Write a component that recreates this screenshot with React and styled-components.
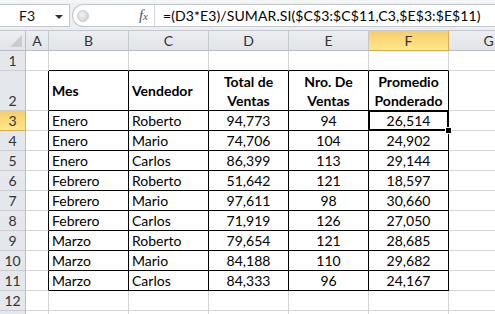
import React from "react";
import styled, { createGlobalStyle } from "styled-components";

const GlobalStyle = createGlobalStyle`
  html, body {
    margin: 0;
    padding: 0;
    background: #ffffff;
  }
`;

const COLS = ["A", "B", "C", "D", "E", "F", "G"];

const rows = [
  ["Enero", "Roberto", "94,773", "94", "26,514"],
  ["Enero", "Mario", "74,706", "104", "24,902"],
  ["Enero", "Carlos", "86,399", "113", "29,144"],
  ["Febrero", "Roberto", "51,642", "121", "18,597"],
  ["Febrero", "Mario", "97,611", "98", "30,660"],
  ["Febrero", "Carlos", "71,919", "126", "27,050"],
  ["Marzo", "Roberto", "79,654", "121", "28,685"],
  ["Marzo", "Mario", "84,188", "110", "29,682"],
  ["Marzo", "Carlos", "84,333", "96", "24,167"],
];

const headers = ["Mes", "Vendedor", "Total de\nVentas", "Nro. De\nVentas", "Promedio\nPonderado"];

const App = () => {
  const sheetRows = [];
  for (let r = 1; r <= 13; r++) {
    const cells = [];
    for (let c = 0; c < COLS.length; c++) {
      const inTableCol = c >= 1 && c <= 5;
      const bottomDark = inTableCol && r >= 1 && r <= 11;
      const rightDark = c <= 5 && r >= 2 && r <= 11;
      let text = "";
      let align = "left";
      let bold = false;
      if (r === 2 && inTableCol) {
        text = headers[c - 1];
        bold = true;
        align = c >= 3 ? "center" : "left";
      } else if (r >= 3 && r <= 11 && inTableCol) {
        text = rows[r - 3][c - 1];
        align = c >= 3 ? "center" : "left";
      }
      cells.push(
        <Cell
          key={c}
          $bottomDark={bottomDark}
          $rightDark={rightDark}
          $align={align}
          $bold={bold}
          $selected={r === 3 && c === 5}
        >
          {text.split("\n").map((line, i) => (
            <Line key={i}>{line}</Line>
          ))}
        </Cell>
      );
    }
    sheetRows.push(
      <React.Fragment key={r}>
        {/* row 13 is only a sliver at the bottom edge, its number is out of view */}
        <RowHead $active={r === 3}>{r <= 12 ? r : ""}</RowHead>
        {cells}
      </React.Fragment>
    );
  }

  return (
    <Page>
      <GlobalStyle />
      <Toolbar>
        <NameBox>
          <span>F3</span>
          <Arrow />
        </NameBox>
        <FormulaBar>
          <Grip />
          <Fx>
            <i>f</i>
            <small>x</small>
          </Fx>
          <Formula>=(D3*E3)/SUMAR.SI($C$3:$C$11,C3,$E$3:$E$11)</Formula>
        </FormulaBar>
      </Toolbar>
      <Sheet>
        <Corner>
          <CornerMark />
        </Corner>
        {COLS.map((col) => (
          <ColHead key={col} $active={col === "F"}>
            {col}
          </ColHead>
        ))}
        {sheetRows}
      </Sheet>
    </Page>
  );
};

export default App;

const Page = styled.div`
  width: 495px;
  height: 314px;
  overflow: hidden;
  font-family: "Lato", "Liberation Sans", sans-serif;
  font-size: 14px;
  color: #000;
  background: #fff;
`;

const Toolbar = styled.div`
  height: 30px;
  box-sizing: border-box;
  display: flex;
  padding: 1px 0 3px;
  background: #eceef1;
  border-top: 3px solid #f4f5f7;
`;

const NameBox = styled.div`
  width: 70px;
  box-sizing: border-box;
  background: #fff;
  border: 1px solid #c3c8cf;
  border-left: none;
  display: flex;
  align-items: center;
  justify-content: space-between;
  padding: 0 6px 0 19px;
  font-size: 14px;
  color: #111;
`;

const Arrow = styled.span`
  width: 0;
  height: 0;
  border-left: 4px solid transparent;
  border-right: 4px solid transparent;
  border-top: 4px solid #333;
  margin-top: 2px;
`;

const FormulaBar = styled.div`
  flex: 1;
  margin-left: 2px;
  display: flex;
  align-items: center;
  background: #fff;
  border: 1px solid #c3c8cf;
  border-right: none;
  border-radius: 12px 0 0 12px;
`;

const Grip = styled.span`
  width: 10px;
  height: 10px;
  margin-left: 4px;
  border-radius: 50%;
  background: radial-gradient(circle at 40% 40%, #f3f4f6 0%, #d2d5da 70%, #b9bdc3 100%);
  border: 1px solid #c9ccd1;
`;

const Fx = styled.span`
  margin-left: auto;
  width: 62px;
  box-sizing: border-box;
  text-align: right;
  padding-right: 6px;
  font-family: "Liberation Serif", serif;
  font-size: 15px;
  color: #555;
  i {
    font-style: italic;
  }
  small {
    font-style: italic;
    font-size: 11px;
  }
`;

const Formula = styled.div`
  align-self: stretch;
  display: flex;
  align-items: center;
  width: 341px;
  box-sizing: border-box;
  border-left: 1px solid #d5d9de;
  padding-left: 8px;
  font-size: 14px;
  letter-spacing: 0.1px;
  white-space: nowrap;
  color: #000;
`;

const Sheet = styled.div`
  display: grid;
  grid-template-columns: 26px 23px repeat(6, 80px);
  grid-template-rows: 21px 20px 40px repeat(11, 20px);
`;

const headBase = `
  box-sizing: border-box;
  display: flex;
  align-items: center;
  justify-content: center;
  font-size: 14px;
  color: #333;
`;

const Corner = styled.div`
  ${headBase}
  position: relative;
  background: linear-gradient(#eceef1, #e1e4e8);
  border-right: 1px solid #b9bec6;
  border-bottom: 1px solid #b9bec6;
  border-top: 1px solid #c3c8cf;
`;

const CornerMark = styled.span`
  position: absolute;
  right: 3px;
  bottom: 3px;
  width: 0;
  height: 0;
  border-left: 12px solid transparent;
  border-bottom: 12px solid #c9ccd1;
`;

const ColHead = styled.div`
  ${headBase}
  background: ${(p) =>
    p.$active
      ? "linear-gradient(#f8cc6a, #fde88c)"
      : "linear-gradient(#eceef1, #e1e4e8)"};
  border-top: 1px solid #c3c8cf;
  border-right: 1px solid ${(p) => (p.$active ? "#d9ad4f" : "#c3c8cf")};
  border-bottom: 1px solid ${(p) => (p.$active ? "#d9ad4f" : "#b9bec6")};
`;

const RowHead = styled.div`
  ${headBase}
  background: ${(p) =>
    p.$active ? "linear-gradient(#f8cc6a, #fde88c)" : "#e4e7eb"};
  border-right: 1px solid ${(p) => (p.$active ? "#d9ad4f" : "#b9bec6")};
  border-bottom: 1px solid ${(p) => (p.$active ? "#d9ad4f" : "#c9cdd3")};
  align-items: flex-end;
  padding-bottom: 1px;
`;

const Cell = styled.div`
  box-sizing: border-box;
  position: relative;
  display: flex;
  flex-direction: column;
  justify-content: center;
  align-items: ${(p) => (p.$align === "center" ? "center" : "flex-start")};
  padding: 0 3px;
  font-weight: ${(p) => (p.$bold ? 700 : 400)};
  border-right: 1px solid ${(p) => (p.$rightDark ? "#000" : "#d4d4d4")};
  border-bottom: 1px solid ${(p) => (p.$bottomDark ? "#000" : "#d4d4d4")};
  white-space: nowrap;

  ${(p) =>
    p.$selected &&
    `
    &::before {
      content: "";
      position: absolute;
      left: -1px;
      top: -1px;
      right: -1px;
      bottom: -1px;
      border: 2px solid #000;
      z-index: 2;
    }
    &::after {
      content: "";
      position: absolute;
      right: -4px;
      bottom: -4px;
      width: 5px;
      height: 5px;
      background: #000;
      border: 1px solid #fff;
      z-index: 3;
    }
  `}
`;

const Line = styled.span`
  line-height: 19px;
`;
